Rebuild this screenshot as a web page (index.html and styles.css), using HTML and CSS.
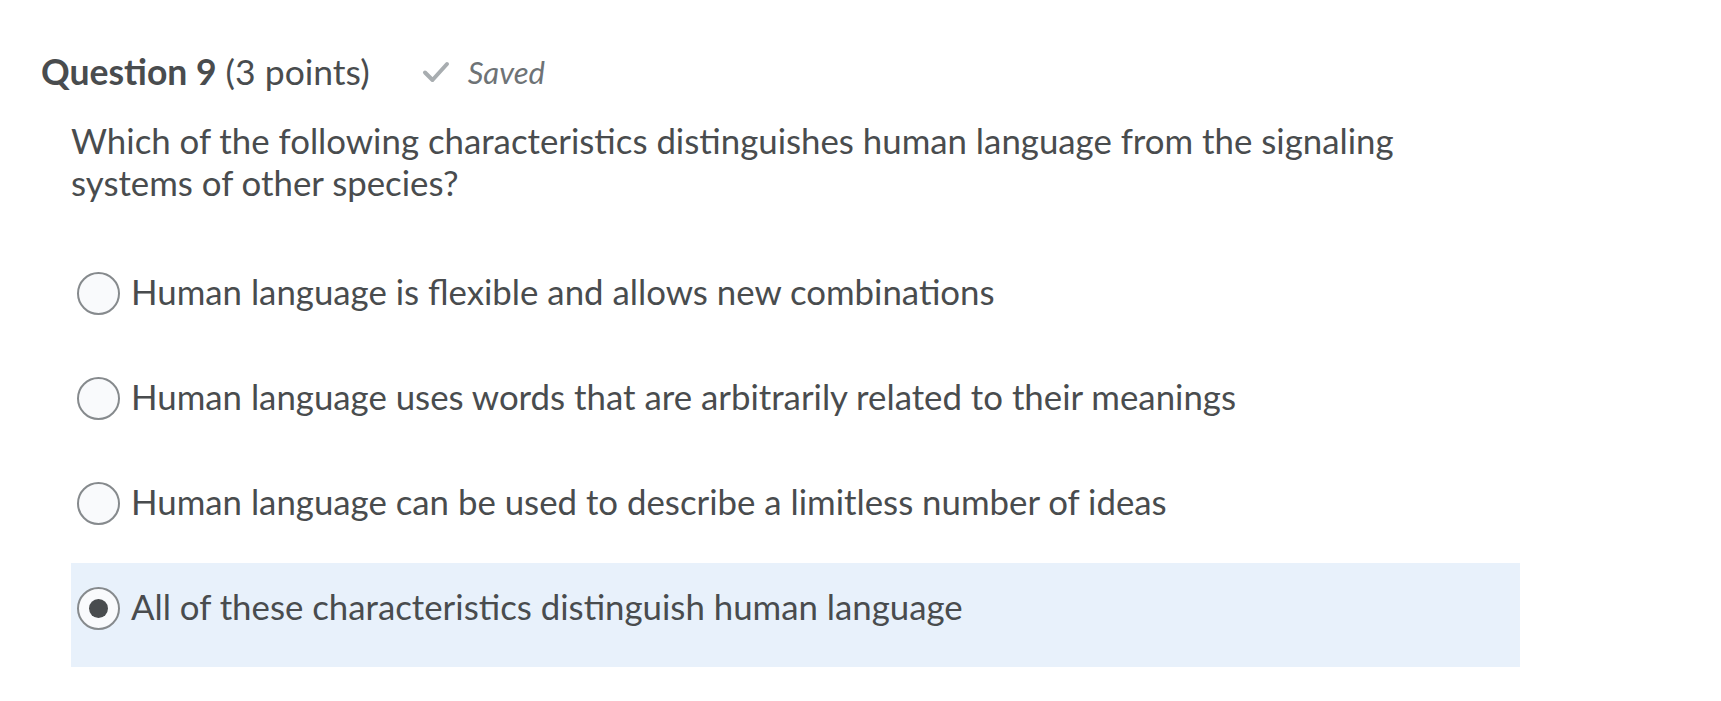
FILE: index.html
```html
<!DOCTYPE html>
<html lang="en">
<head>
<meta charset="utf-8">
<title>Question 9</title>
<link rel="stylesheet" href="styles.css">
</head>
<body>
<div class="question">
	<div class="q_head">
		<h2 class="q_title"><strong>Question 9</strong> (3 points)</h2>
		<span class="q_saved">
			<svg class="q_check" viewBox="0 0 28 22" width="28" height="22"><path d="M3 11.5 L10.5 19 L25 3" fill="none" stroke="#a8adb0" stroke-width="4" stroke-linecap="round" stroke-linejoin="round"/></svg>
			Saved
		</span>
	</div>
	<div class="q_body">
		<p class="q_text">Which of the following characteristics distinguishes human language from the signaling systems of other species?</p>
		<ul class="choices">
			<li class="choice"><span class="radio"></span><span class="choice_text">Human language is flexible and allows new combinations</span></li>
			<li class="choice"><span class="radio"></span><span class="choice_text">Human language uses words that are arbitrarily related to their meanings</span></li>
			<li class="choice"><span class="radio"></span><span class="choice_text">Human language can be used to describe a limitless number of ideas</span></li>
			<li class="choice selected"><span class="radio"></span><span class="choice_text">All of these characteristics distinguish human language</span></li>
		</ul>
	</div>
</div>
</body>
</html>
```

FILE: styles.css
```css
body {
	margin:0;
	background:#fff;
	color:#494c4e;
	font-family:Lato, "Noto Sans", sans-serif;
}
.question { padding:44px 0 0 41px; }

.q_head { display:flex; align-items:center; gap:52px; height:56px; }
.q_title { margin:0; font-size:35.5px; font-weight:400; line-height:56px; }
.q_title strong { font-weight:700; }
.q_saved {
	display:flex;
	align-items:center;
	gap:18px;
	font-size:31px;
	font-style:italic;
	color:#6e7376;
}

.q_body { margin-left:30px; width:1449px; }
.q_text {
	margin:20px 0 44px;
	font-size:34.8px;
	line-height:42px;
	max-width:1360px;
}

.choices { list-style:none; margin:0; padding:0; }
.choice {
	display:flex;
	align-items:flex-start;
	gap:11px;
	height:104px;
	padding:24px 0 0 6px;
	box-sizing:border-box;
	margin-bottom:1px;
	font-size:34.8px;
}
.choice.selected { background:#e8f1fb; }
.choice_text { line-height:39px; }

.radio {
	flex:none;
	width:43px;
	height:43px;
	box-sizing:border-box;
	border:2px solid #868a8d;
	border-radius:50%;
	background:#f9fafc;
	position:relative;
}
.selected .radio::after {
	content:"";
	position:absolute;
	left:10px;
	top:10px;
	width:19px;
	height:19px;
	border-radius:50%;
	background:#494c4e;
}
```
